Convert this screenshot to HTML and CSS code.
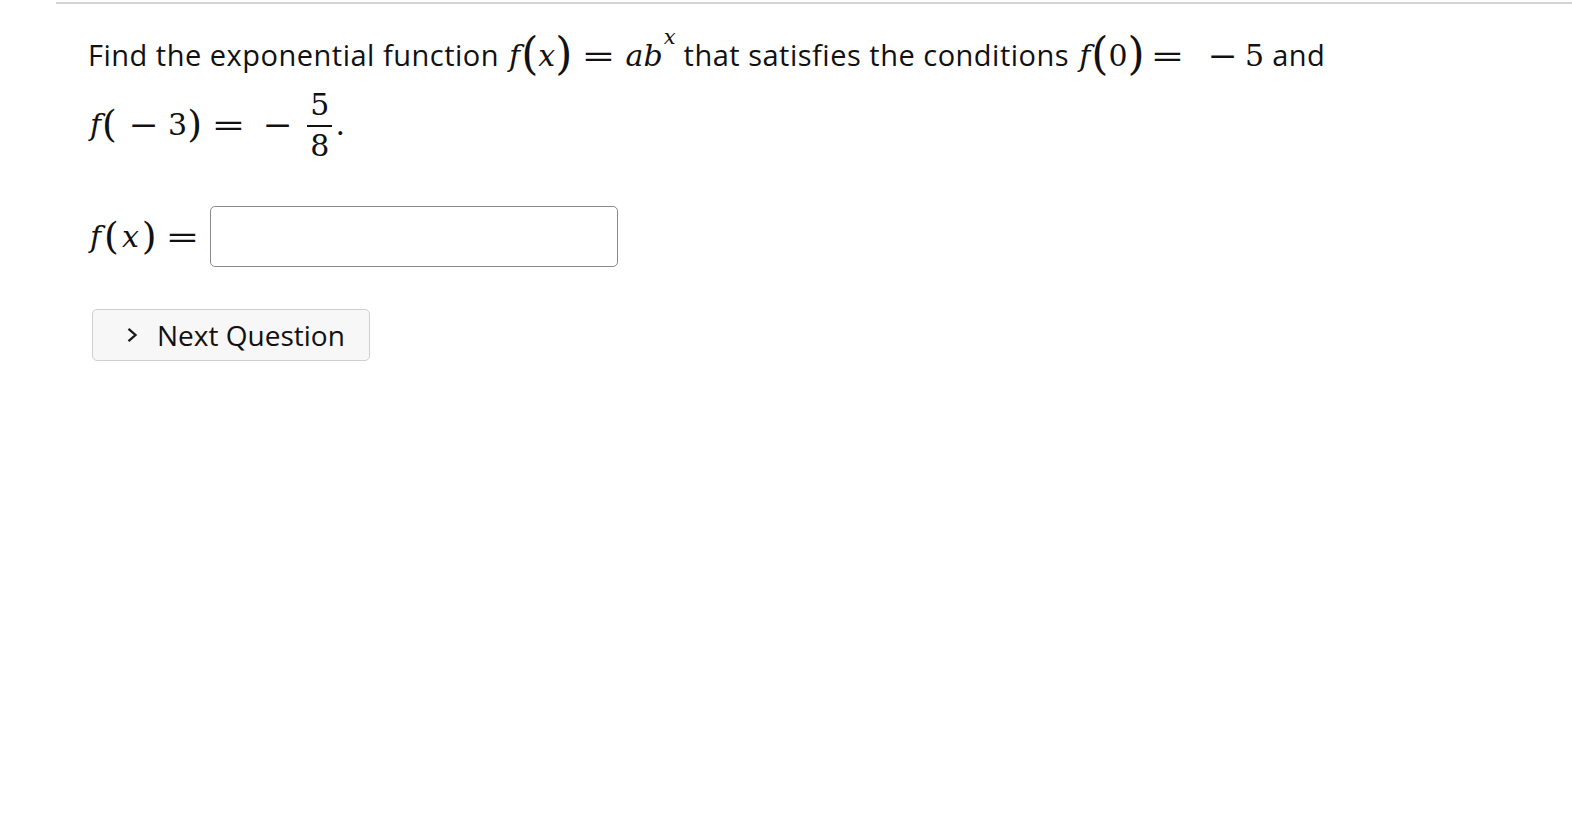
FILE: index.html
```html
<!DOCTYPE html>
<html>
<head>
<meta charset="utf-8">
<link rel="stylesheet" href="styles.css">
</head>
<body>
<div class="rule"></div>
<main class="content">
  <div class="line1">Find the exponential function <span class="m"><i class="mi f">f</i><span class="p p1">(</span><i class="mi">x</i><span class="p p1">)</span><span class="eq">=</span><i class="mi">a</i><i class="mi">b</i><sup class="sx"><i>x</i></sup></span> that satisfies the conditions <span class="m"><i class="mi f">f</i><span class="p p1">(</span>0<span class="p p1">)</span><span class="eq eq0">=</span><span class="neg">−</span>5</span> and</div>
  <div class="line2"><span class="m"><i class="mi f">f</i><span class="p p2">(</span><span class="neg neg2">−</span>3<span class="p p2">)</span><span class="eq">=</span><span class="neg neg3">−</span><span class="frac"><span class="num">5</span><span class="den">8</span></span><span class="dot">.</span></span></div>
  <div class="answer">
    <span class="m"><i class="mi f">f</i><span class="p p2 pa">(</span><i class="mi xa">x</i><span class="p p2 pa">)</span><span class="eq">=</span></span>
    <input class="box" type="text" aria-label="f(x)">
  </div>
  <button class="next" type="button"><svg class="chev" viewBox="0 0 12 16" width="12" height="16"><path d="M2.5 1.8 L9.5 8 L2.5 14.2" fill="none" stroke="#1a1a1a" stroke-width="2.3"/></svg><span>Next Question</span></button>
</main>
</body>
</html>
```
FILE: styles.css
```css
html, body { margin: 0; padding: 0; background: #fff; }
body { font-family: "Open Sans", sans-serif; color: #111; }
.rule { margin-left: 56px; height: 2px; background: #d3d3d3; margin-top: 2px; }
.content { padding-left: 88px; }
.line1 { font-size: 29px; letter-spacing: 0.5px; line-height: 40px; margin-top: 31px; white-space: nowrap; }
.line2 { font-size: 29px; line-height: 40px; margin-top: 15px; }
.m { font-family: "DejaVu Serif", "Liberation Serif", serif; font-size: 30px; line-height: 1; letter-spacing: 0; color: #111; }
.mi { font-style: italic; }
.f { margin-left: 2px; margin-right: 1px; }
.p { line-height: 0; }
.p1 { font-size: 44px; vertical-align: -3px; }
.p2 { font-size: 38px; vertical-align: -2px; }
.eq { display: inline-block; transform: scaleX(1.35); margin: 0 14px; }
.eq0 { margin: 0 12px 0 10px; }
.neg { display: inline-block; transform: scaleX(1.2); margin: 0 10px 0 18px; }
.neg2 { margin: 0 12px 0 14px; }
.neg3 { margin: 0 17px 0 10px; }
sup.sx { font-family: "DejaVu Serif", serif; font-size: 21px; vertical-align: 22px; line-height: 0; margin-left: 1px; }
.frac { display: inline-flex; flex-direction: column; align-items: center; vertical-align: 20px; font-family: "DejaVu Serif", serif; font-size: 30px; }
.num { display: block; line-height: 30px; padding: 0 3px 5px; border-bottom: 2px solid #111; }
.den { display: block; line-height: 30px; padding-top: 4px; }
.dot { margin-left: 3px; }
.answer { display: flex; align-items: center; margin-top: 45px; }
.answer .eq { margin: 0 15px 0 11px; }
.pa { margin: 0 2px; }
.xa { margin: 0 1px; }
.box { width: 408px; height: 61px; box-sizing: border-box; border: 1.5px solid #8a8a8a; border-radius: 5px; margin: 0; padding: 0; background: #fff; }
.next { margin-top: 42px; margin-left: 4px; width: 278px; height: 52px; box-sizing: border-box; background: #f7f7f7; border: 1.5px solid #cfcfcf; border-radius: 5px; font-family: "Open Sans", sans-serif; font-size: 28px; color: #111; display: flex; align-items: center; justify-content: flex-start; gap: 19px; padding: 0 0 0 33px; }
.chev { flex: none; }
```
